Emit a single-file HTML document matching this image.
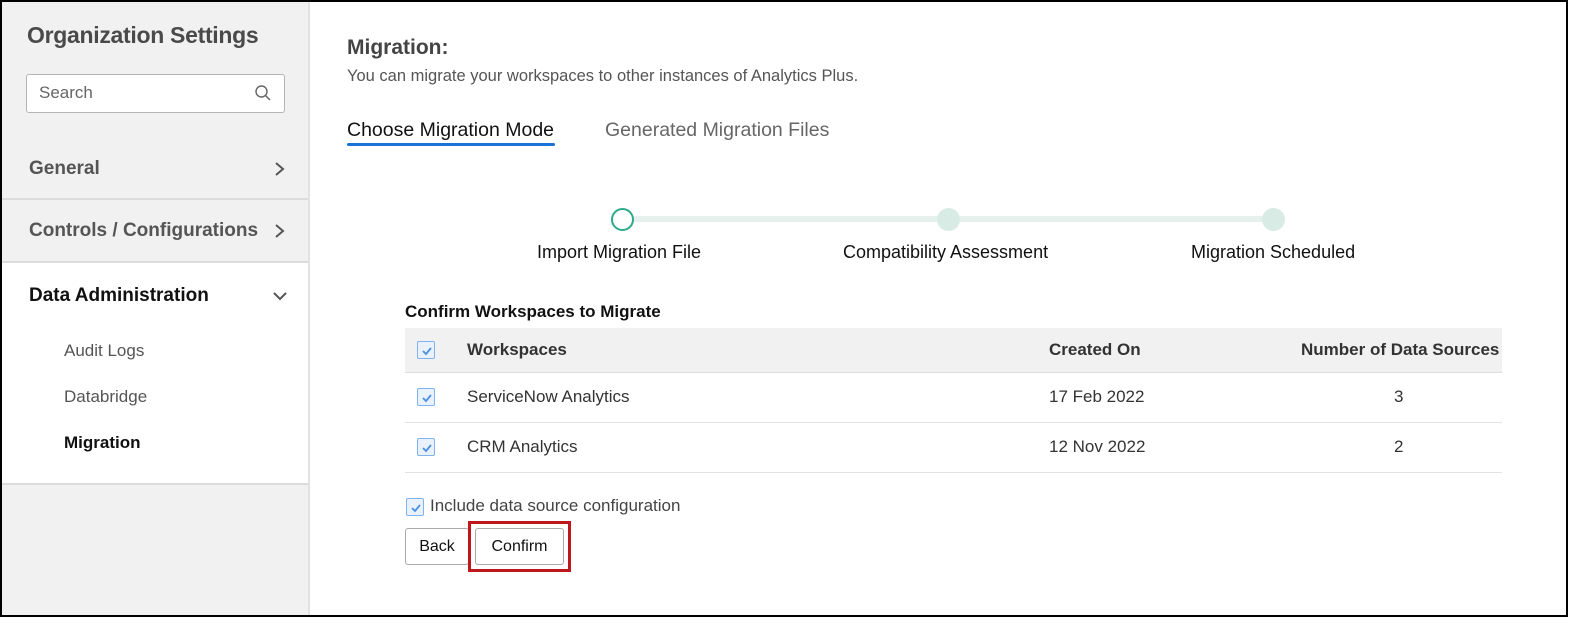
<!DOCTYPE html>
<html><head><style>
*{box-sizing:border-box;margin:0;padding:0}
body{width:1590px;height:626px;overflow:hidden;background:#fff;font-family:"Liberation Sans",sans-serif;position:relative}
.frame{position:absolute;left:0;top:0;width:1568px;height:617px;border:2px solid #000;}
.side{position:absolute;left:2px;top:2px;width:308px;height:613px;background:#f1f1f1;border-right:2px solid #e2e2e2}
.a{position:absolute;white-space:nowrap}
.chk{position:absolute;width:18px;height:18px;border:1px solid #7fb2ee;background:#e8f1fc;border-radius:2px}
.chk svg{position:absolute;left:2px;top:2px}
.btn{position:absolute;border:1px solid #aaa;border-radius:3px;background:#fff;font-size:16px;color:#111;text-align:center}
</style></head><body>
<div class="frame"></div>
<div class="side">
 <div class="a" style="left:25px;top:20px;font-size:23px;color:#4a4a4a;font-weight:bold;letter-spacing:-0.3px">Organization Settings</div>
 <div class="a" style="left:24px;top:72px;width:259px;height:39px;background:#fff;border:1px solid #b5b5b5;border-radius:3px"></div>
 <div class="a" style="left:37px;top:81px;font-size:17px;color:#666">Search</div>
 <svg class="a" style="left:252px;top:82px" width="18" height="18" viewBox="0 0 18 18"><circle cx="7.5" cy="7.5" r="5.5" fill="none" stroke="#666" stroke-width="1.4"/><path d="M11.5 11.5L16 16" stroke="#666" stroke-width="1.5"/></svg>
 <div class="a" style="left:27px;top:156px;font-size:19px;color:#555;font-weight:bold">General</div>
 <svg class="a" style="left:272px;top:159px" width="12" height="16"><path d="M2 2L9 8L2 14" fill="none" stroke="#555" stroke-width="2"/></svg>
 <div class="a" style="left:0;top:196px;width:306px;height:2px;background:#dcdcdc"></div>
 <div class="a" style="left:27px;top:218px;font-size:19px;color:#555;font-weight:bold">Controls / Configurations</div>
 <svg class="a" style="left:272px;top:221px" width="12" height="16"><path d="M2 2L9 8L2 14" fill="none" stroke="#555" stroke-width="2"/></svg>
 <div class="a" style="left:0;top:259px;width:306px;height:224px;background:#fff;border-top:2px solid #dcdcdc;border-bottom:2px solid #dcdcdc"></div>
 <div class="a" style="left:27px;top:283px;font-size:19px;color:#111;font-weight:bold">Data Administration</div>
 <svg class="a" style="left:270px;top:289px" width="16" height="10"><path d="M2 2L8 8L14 2" fill="none" stroke="#555" stroke-width="2"/></svg>
 <div class="a" style="left:62px;top:339px;font-size:17px;color:#555">Audit Logs</div>
 <div class="a" style="left:62px;top:385px;font-size:17px;color:#555">Databridge</div>
 <div class="a" style="left:62px;top:431px;font-size:17px;color:#111;font-weight:bold">Migration</div>
</div>
<div class="a" style="left:347px;top:36px;font-size:21px;color:#444;font-weight:bold">Migration:</div>
<div class="a" style="left:347px;top:67px;font-size:16.5px;color:#555">You can migrate your workspaces to other instances of Analytics Plus.</div>
<div class="a" style="left:347px;top:119px;font-size:19.5px;color:#111">Choose Migration Mode</div>
<div class="a" style="left:347px;top:143px;width:208px;height:3px;background:#1a73d8;border-radius:2px"></div>
<div class="a" style="left:605px;top:119px;font-size:19.5px;color:#666">Generated Migration Files</div>
<div class="a" style="left:622px;top:216px;width:650px;height:6px;background:#e6f1ee"></div>
<div class="a" style="left:611px;top:208px;width:23px;height:23px;border:2.5px solid #2bab8c;border-radius:50%;background:#fff"></div>
<div class="a" style="left:937px;top:208px;width:23px;height:23px;border-radius:50%;background:#d8ebe5"></div>
<div class="a" style="left:1262px;top:208px;width:23px;height:23px;border-radius:50%;background:#d8ebe5"></div>
<div class="a" style="left:537px;top:242px;font-size:18px;color:#111">Import Migration File</div>
<div class="a" style="left:843px;top:242px;font-size:18px;color:#111">Compatibility Assessment</div>
<div class="a" style="left:1191px;top:242px;font-size:18px;color:#111">Migration Scheduled</div>
<div class="a" style="left:405px;top:302px;font-size:17px;color:#111;font-weight:bold">Confirm Workspaces to Migrate</div>
<div class="a" style="left:405px;top:328px;width:1097px;height:45px;background:#f1f1f1;border-bottom:1px solid #ddd"></div>
<div class="a" style="left:405px;top:422px;width:1097px;height:1px;background:#e2e2e2"></div>
<div class="a" style="left:405px;top:472px;width:1097px;height:1px;background:#e2e2e2"></div>
<div class="chk" style="left:417px;top:341px"><svg width="14" height="14"><path d="M3 7L6 10L11 4" fill="none" stroke="#4a90e2" stroke-width="1.8"/></svg></div>
<div class="chk" style="left:417px;top:388px"><svg width="14" height="14"><path d="M3 7L6 10L11 4" fill="none" stroke="#4a90e2" stroke-width="1.8"/></svg></div>
<div class="chk" style="left:417px;top:438px"><svg width="14" height="14"><path d="M3 7L6 10L11 4" fill="none" stroke="#4a90e2" stroke-width="1.8"/></svg></div>
<div class="chk" style="left:406px;top:498px"><svg width="14" height="14"><path d="M3 7L6 10L11 4" fill="none" stroke="#4a90e2" stroke-width="1.8"/></svg></div>
<div class="a" style="left:467px;top:340px;font-size:17px;color:#333;font-weight:bold">Workspaces</div>
<div class="a" style="left:1049px;top:340px;font-size:17px;color:#333;font-weight:bold">Created On</div>
<div class="a" style="left:1301px;top:340px;font-size:17px;color:#333;font-weight:bold">Number of Data Sources</div>
<div class="a" style="left:467px;top:387px;font-size:17px;color:#333">ServiceNow Analytics</div>
<div class="a" style="left:1049px;top:387px;font-size:17px;color:#333">17 Feb 2022</div>
<div class="a" style="left:1394px;top:387px;font-size:17px;color:#333">3</div>
<div class="a" style="left:467px;top:437px;font-size:17px;color:#333">CRM Analytics</div>
<div class="a" style="left:1049px;top:437px;font-size:17px;color:#333">12 Nov 2022</div>
<div class="a" style="left:1394px;top:437px;font-size:17px;color:#333">2</div>
<div class="a" style="left:430px;top:496px;font-size:17px;color:#444">Include data source configuration</div>
<div class="btn" style="left:405px;top:528px;width:64px;height:37px;line-height:35px">Back</div>
<div class="a" style="left:468px;top:521px;width:103px;height:51px;border:3px solid #c0161d"></div>
<div class="btn" style="left:475px;top:528px;width:89px;height:37px;line-height:35px">Confirm</div>
</body></html>
